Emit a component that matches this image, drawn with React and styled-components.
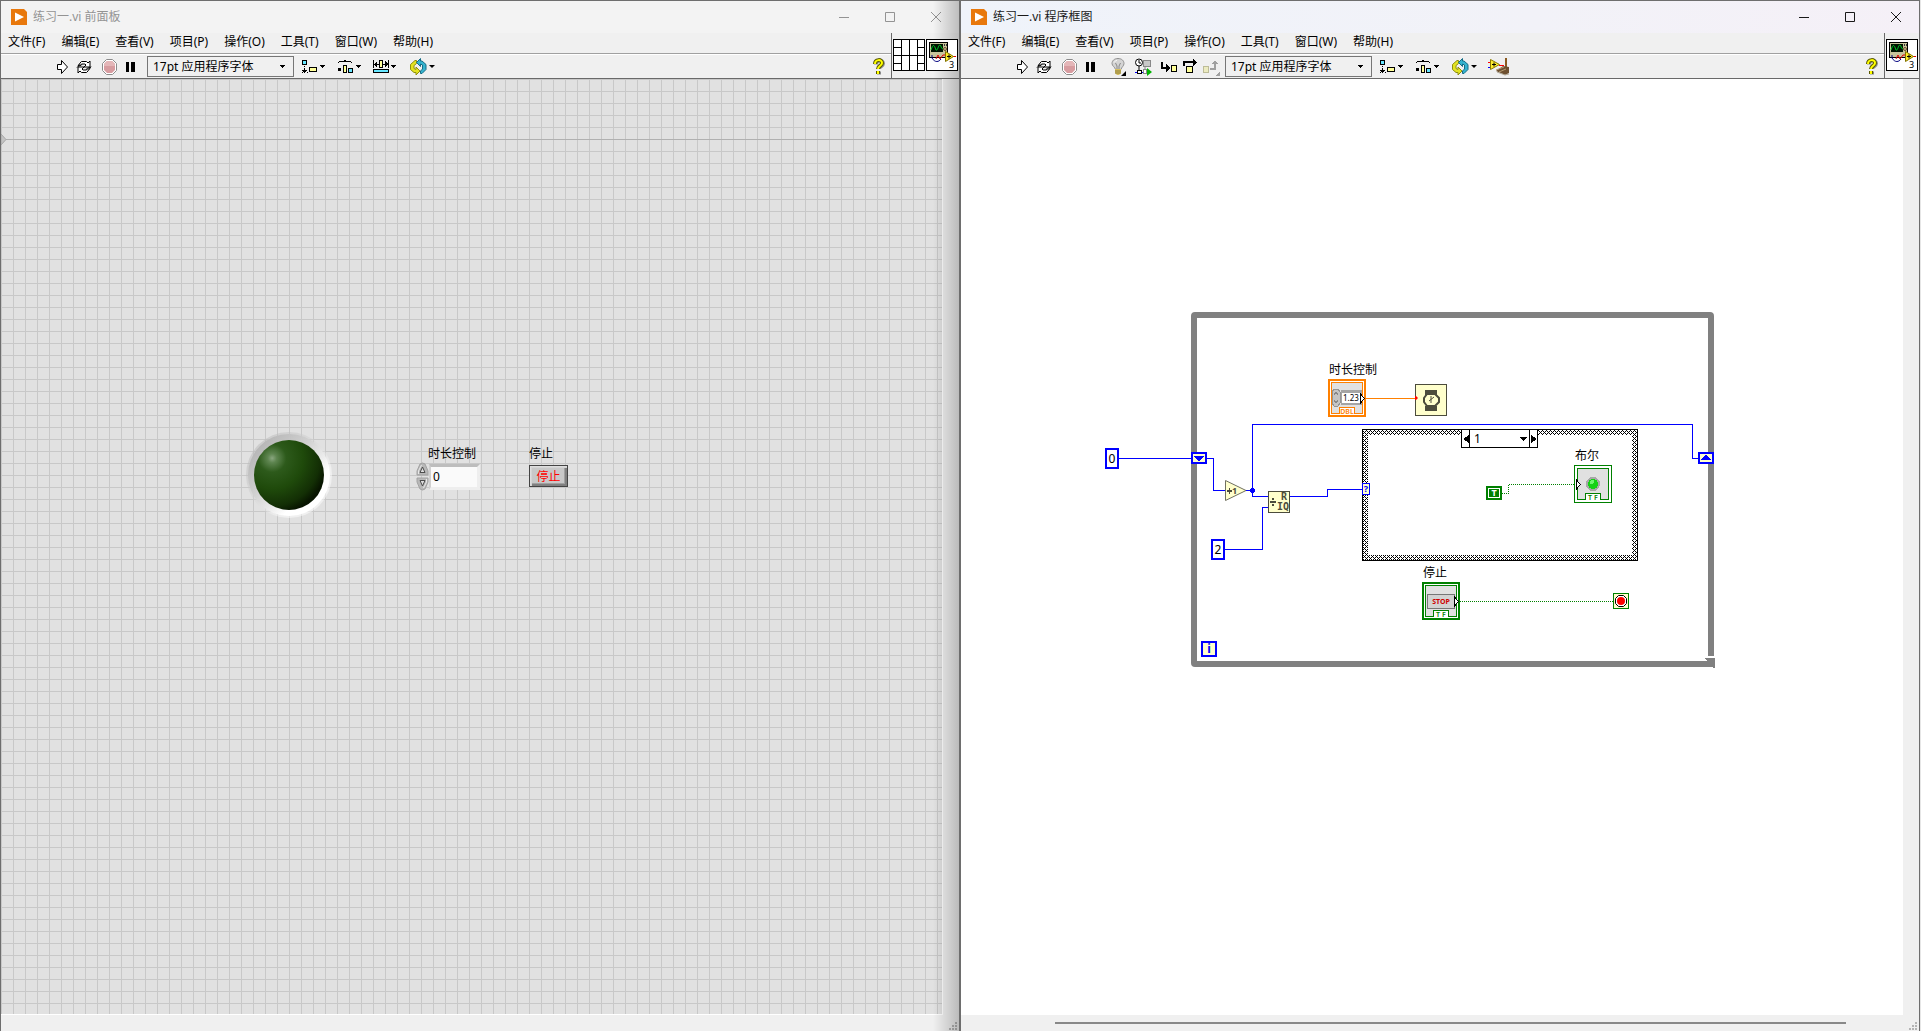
import React from 'react'
import styled, { createGlobalStyle, css } from 'styled-components'

const BLUE = '#0000ff'
const GREEN = '#008000'
const ORANGE = '#ff8000'
const CREAM = '#ffffcc'
const OLIVE = '#4c4c3c'

const GlobalStyle = createGlobalStyle`
	* {
		box-sizing: border-box;
	}

	body {
		background: #e6e6e6;
		color: #000;
		font: 12px/16px 'Noto Sans', 'Noto Sans CJK SC', sans-serif;
		margin: 0;
	}

	button, input, select {
		background: none;
		border: 0;
		border-radius: 0;
		color: inherit;
		font: inherit;
		margin: 0;
		padding: 0;
	}

	svg {
		display: block;
	}
`

const Desktop = styled.div`
	display: grid;
	grid-template-columns: 1fr 1fr;
	min-height: 100vh;
	padding-right: 1px;
`

const Window = styled.section`
	background: #f0f0f0;
	border: 1px solid #6e6e6e;
	border-bottom: 0;
	display: flex;
	flex-direction: column;
	min-width: 0;
	position: relative;

	${props =>
		props.$shaded &&
		css`
			&::after {
				background: linear-gradient(to right, transparent, rgba(0, 0, 0, 0.22));
				bottom: 0;
				content: '';
				pointer-events: none;
				position: absolute;
				right: 0;
				top: 0;
				width: 26px;
			}
		`}
`

const TitleBar = styled.header`
	align-items: center;
	background: ${props =>
		props.$active ? 'linear-gradient(to right, #eff3fa, #f2f2f8 60%, #f5f0f7)' : '#f3f3f3'};
	color: ${props => (props.$active ? '#191919' : '#939393')};
	display: flex;
	height: 32px;
	padding-left: 10px;
`

const Title = styled.h1`
	flex-grow: 1;
	font-size: 12px;
	font-weight: 400;
	margin: 0 0 0 6px;
`

const CaptionButton = styled.button`
	display: grid;
	height: 32px;
	place-items: center;
	width: 46px;
`

const Head = styled.div`
	border-bottom: 1px solid #696969;
	display: flex;
	height: 46px;
`

const Bars = styled.div`
	flex-grow: 1;
	min-width: 0;
`

const MenuBar = styled.nav`
	border-bottom: 1px solid #a0a0a0;
	display: flex;
	gap: 16px;
	height: 21px;
	padding: 1px 0 0 7px;

	a {
		color: inherit;
		text-decoration: none;
	}
`

const Toolbar = styled.div`
	align-items: center;
	border-top: 1px solid #fff;
	display: flex;
	height: 24px;
	padding-left: 50px;
`

const ToolButton = styled.button`
	flex: none;
	margin-left: ${props => props.$gap || 0}px;
	width: ${props => props.$w}px;
`

const FontBox = styled.div`
	background: #f0f0f0;
	border: 1px solid #767676;
	display: grid;
	height: 21px;
	margin: 0 2px 0 ${props => props.$gap}px;
	width: 147px;

	> * {
		grid-area: 1 / 1;
	}

	select {
		appearance: none;
		line-height: 19px;
		padding-left: 5px;
	}

	svg {
		align-self: center;
		justify-self: end;
		margin-right: 8px;
		pointer-events: none;
	}
`

const HelpButton = styled.button`
	margin: 0 6px 0 auto;
`

const Corner = styled.div`
	border-left: 1px solid #696969;
	display: flex;
	flex: none;
	gap: 1px;
	padding: 6px 1px 0;
	position: relative;
	z-index: 1;
`

const Body = styled.main`
	display: grid;
	flex-grow: 1;
	grid-template-columns: 1fr 16px;
	grid-template-rows: 1fr 16px;
`

const Panel = styled.div`
	background:
		linear-gradient(#b0b0b0, #b0b0b0) 0 60px / 100% 1px no-repeat,
		linear-gradient(to right, #c8c8c8 1px, transparent 1px) 0 0 / 12px 12px,
		linear-gradient(#c8c8c8 1px, transparent 1px) 0 0 / 12px 12px,
		#e1e1e1;
	border-bottom: 1px solid #fff;
	border-right: 1px solid #fff;
	overflow: hidden;
	position: relative;
`

const Diagram = styled.div`
	background: #fff;
	overflow: hidden;
	position: relative;
`

const Track = styled.div`
	grid-row: 2;
	padding: 7px 57px 0 94px;

	&::before {
		background: #888;
		content: '';
		display: block;
		height: 2px;
		visibility: ${props => (props.$thumb ? 'visible' : 'hidden')};
	}
`

const Grip = styled.div`
	align-items: end;
	display: grid;
	grid-area: 2 / 2;
	justify-content: end;
	padding: 0 2px 1px 0;
`

/* Anything that sits freely on a panel or diagram */
const Placed = styled.div`
	left: ${props => props.$x}px;
	position: absolute;
	top: ${props => props.$y}px;
`

const Caption = styled(Placed)`
	white-space: nowrap;
`

const Wires = styled.svg`
	fill: none;
	left: 0;
	pointer-events: none;
	position: absolute;
	shape-rendering: crispEdges;
	top: 0;
`

const Loop = styled(Placed)`
	border: 6px solid #808080;
	border-radius: 4px;
	height: 355px;
	width: 523px;
`

/* Woven border: a 1px checker with every fourth black pixel knocked out */
const CaseFrame = styled(Placed)`
	background:
		conic-gradient(from 270deg at 1px 1px, #fff 25%, transparent 0) 1px 0 / 4px 4px,
		conic-gradient(from 270deg at 1px 1px, #fff 25%, transparent 0) 3px 2px / 4px 4px,
		repeating-conic-gradient(#000 0 25%, #fff 0 50%) 0 0 / 2px 2px;
	border: 1px solid #000;
	height: 132px;
	padding: 5px;
	width: 276px;

	&::before {
		background: #fff;
		content: '';
		display: block;
		height: 100%;
	}
`

const CaseSelector = styled(Placed)`
	background: #fff;
	border: 1px solid #000;
	display: grid;
	grid-template-columns: 7px 1fr 7px;
	height: 19px;
	width: 77px;

	button {
		display: grid;
		place-items: center;
	}

	div {
		border: 1px solid #000;
		border-width: 0 1px;
		display: grid;
	}

	div > * {
		grid-area: 1 / 1;
	}

	select {
		appearance: none;
		line-height: 17px;
		padding-left: 4px;
	}

	svg {
		pointer-events: none;
	}

	div svg {
		align-self: center;
		justify-self: end;
		margin-right: 2px;
	}
`

const Constant = styled(Placed)`
	background: #fff;
	border: 2px solid ${BLUE};
	height: 21px;
	line-height: 17px;
	text-align: center;
	width: 14px;
`

const Counter = styled(Placed)`
	background: ${CREAM};
	border: 2px solid ${BLUE};
	color: ${BLUE};
	font-weight: 700;
	height: 16px;
	line-height: 12px;
	text-align: center;
	width: 16px;
`

const Numeric = styled(Placed)`
	align-items: center;
	display: flex;

	input {
		background: #fafafa;
		border: 3px solid #eee;
		border-left: 2px solid #d0d0d0;
		border-top-color: #bdbdbd;
		height: 26px;
		padding-left: 2px;
		width: 51px;
	}
`

const Spinner = styled.div`
	display: flex;
	flex-direction: column;
	gap: 1px;

	button {
		height: 14px;
	}
`

const StopButton = styled(Placed)`
	background: #c8c8c8;
	border: 1px solid #444;
	box-shadow: inset 1px 1px #dedede, inset 2px 2px #d4d4d4, inset -2px -2px #808080, inset -3px -3px #a0a0a0;
	color: #f00;
	height: 22px;
	padding-top: 1px;
	width: 39px;
`

const MENUS = ['文件(F)', '编辑(E)', '查看(V)', '项目(P)', '操作(O)', '工具(T)', '窗口(W)', '帮助(H)']

const Crisp = props => <svg shapeRendering="crispEdges" aria-hidden="true" {...props} />

const Logo = () => (
	<svg width="16" height="16" aria-hidden="true">
		<path d="M0 0h13l3 3v13H0z" fill="#e8780c" />
		<path d="M4 3.500L13 8l-9 4.500z" fill="#fff" />
	</svg>
)

const Triangle = () => <path d="M0 0h6l-3 3z" />

const RunIcon = () => (
	<svg width="22" height="18">
		<path d="M6.500 6.500h4v-4l6 6.500-6 6.500v-4h-4z" fill="#fff" stroke="#000" />
	</svg>
)

const RunLoopIcon = () => (
	<svg width="22" height="18" fill="#fff" stroke="#000">
		<path d="M6.500 5.500l2-2h5l1.500 1.500 2-2v6h-6l2-2-1-1h-3l-1 1.500-3 .5z" />
		<path d="M15.500 12.500l-2 2h-5L7 13l-2 2V9h6l-2 2 1 1h3l1.500-2 3-.5z" />
		<path d="M4 9.500l4-4M18 8.500l-4 4" />
	</svg>
)

const AbortIcon = () => (
	<svg width="22" height="18">
		<path d="M7.500 1.500h6l4 4v7l-4 4h-6l-4-4v-7z" fill="#fff" stroke="#8c8c8c" />
		<path d="M8 3h5l3 3v6l-3 3H8l-3-3V6z" fill="#d89ca0" />
		<path d="M8 3h5l3 3v2H5V6z" fill="#e4b6b8" />
	</svg>
)

const PauseIcon = () => (
	<Crisp width="20" height="18">
		<path d="M5 4h3v10H5zM10 4h4v10h-4z" />
	</Crisp>
)

const BulbIcon = () => (
	<svg width="24" height="18">
		<path
			d="M11 .5c4 0 6 2.500 6 5 0 2.500-2.500 3.500-3 6H8.500c-.5-2.500-3.500-3.500-3.500-6 0-2.500 2-5 6-5z"
			fill="#d4d4d4"
			stroke="#909090"
		/>
		<path d="M7 4.500C8 3 9 2.500 10 2.500" fill="none" stroke="#fff" />
		<path d="M8.500 5l1.500 3v3m3.500-6L12 8v3" fill="none" stroke="#888" />
		<path d="M8 11h6v4l-2 2h-2l-2-2z" fill="#d8c060" />
		<path d="M8 13h6m-6 2h6" stroke="#8a7d3a" />
		<path d="M19 13v5h-5z" />
	</svg>
)

const RetainIcon = () => (
	<svg width="26" height="18">
		<rect x="12.500" y="2.500" width="7" height="6" fill="#c8c8c8" stroke="#888" />
		<path d="M14 8.500v4" stroke="#888" />
		<circle cx="8" cy="4.500" r="3.500" fill="#fff" stroke="#000" />
		<path d="M8 2v3h2M8 8v4" fill="none" stroke="#000" />
		<path d="M4 14.500h13" stroke={BLUE} />
		<rect x="6.500" y="12.500" width="4" height="3" fill="#fff" stroke="#000" />
		<rect x="12.500" y="11.500" width="3" height="4" fill="#fff" stroke="#888" />
		<path d="M16 10l5 4-5 4z" fill="#00b400" />
	</svg>
)

const StepIntoIcon = () => (
	<Crisp width="23" height="18">
		<path d="M4 4h2v5h3V6l4 4-4 4v-3H4z" />
		<rect x="14.500" y="7.500" width="5" height="6" fill="#ffff99" stroke="#000" />
	</Crisp>
)

const StepOverIcon = () => (
	<Crisp width="20" height="18">
		<path d="M3 8V3h10V1l4 3-4 4V5H5v3z" />
		<rect x="6.500" y="8.500" width="6" height="6" fill="#ffff99" stroke="#000" />
	</Crisp>
)

const StepOutIcon = () => (
	<Crisp width="22" height="18">
		<rect x="3.500" y="8.500" width="5" height="6" fill="#ecebc0" stroke="#bdbc98" />
		<path d="M10 10h4V6h-2l3-4 3 4h-2v6h-6zM20 13v5h-5z" fill="#a0a0a0" />
	</Crisp>
)

const AlignIcon = () => (
	<Crisp width="26" height="18">
		<rect x="1.500" y="2.500" width="4" height="4" fill="#66e6ff" stroke="#000" />
		<path d="M3 8h1v1H3zM3 10h1v2H3zM1 12h5l-2 3H3zM1 14h1v1H1zM6 14h1v1H6z" />
		<rect x="8.500" y="9.500" width="7" height="4" fill="#ffff99" stroke="#000" />
		<g transform="translate(18 7)"><Triangle /></g>
	</Crisp>
)

const DistributeIcon = () => (
	<Crisp width="26" height="18">
		<path d="M1 4h1V3h5V2h2v1h5v1h1v1h-1V4H2v1H1zM1 10h3v3H1z" />
		<rect x="6.500" y="7.500" width="3" height="7" fill="#ffff99" stroke="#000" />
		<rect x="11.500" y="10.500" width="4" height="4" fill="#66e6ff" stroke="#000" />
		<g transform="translate(18 7)"><Triangle /></g>
	</Crisp>
)

const ResizeIcon = () => (
	<Crisp width="26" height="18">
		<path d="M0 2h1v8H0zM15 2h1v8h-1zM1 6l3-3v7zM15 6l-3-3v7zM4 6h8v1H4z" />
		<rect x="6.500" y="2.500" width="3" height="7" fill="#ffff99" stroke="#000" />
		<rect x=".5" y="11.500" width="15" height="3" fill="#66e6ff" stroke="#000" />
		<g transform="translate(17 7)"><Triangle /></g>
	</Crisp>
)

const ReorderIcon = () => (
	<svg width="27" height="18" aria-hidden="true">
		<path
			d="M7.500 2.500H6L1.500 6.500v5L5 14.500h2v2.500l4-4-4-4v2.500l-2-1v-3l2.500-2z"
			fill="#e4e420"
			stroke="#8e8e10"
		/>
		<path
			d="M11.500 15.500H13l4-4v-5l-4-3.500h-1.500V.5l-4 4 4 4V6l2 1v4l-2 2z"
			fill="#35b3cf"
			stroke="#156c85"
		/>
		<g transform="translate(20 7)"><Triangle /></g>
	</svg>
)

const CleanUpIcon = () => (
	<svg width="30" height="20">
		<path d="M6 5.500h3m8 3h5" stroke="#f00" />
		<path d="M6 10.500h3" stroke={BLUE} />
		<path d="M8.500 2.500l9 5-9 5z" fill="#ffee30" stroke="#8a7a00" />
		<path d="M10 7.500h4m-2-2v4" stroke="#000" />
		<path d="M24 1v11" stroke="#8a5a20" strokeWidth="2" />
		<path d="M21 9l6 1v6l-4 2-9-4z" fill="#6e5030" />
		<path d="M14 13l8-3m-5 5l7-3" stroke="#b59a70" />
		<path d="M15 15l8 3 4-1" fill="none" stroke="#b0a898" />
	</svg>
)

const HelpIcon = () => (
	<svg width="12" height="18">
		<g fill="none" strokeLinejoin="round">
			<path d="M3 6.500c0-5 7-5 7-1 0 3-4 2.500-4 5.500m0 2.500v3" stroke="#8c8c8c" strokeWidth="4" />
			<path d="M2 6c0-5 7-5 7-1 0 3-4 2.500-4 6m0 2v3" stroke="#5a5a00" strokeWidth="4" />
			<path d="M2 6c0-5 7-5 7-1 0 3-4 2.500-4 6m0 2v3" stroke="#ffff00" strokeWidth="2" />
		</g>
	</svg>
)

const ConnectorPane = () => (
	<Crisp width="32" height="32">
		<path
			d="M.5.5h31v31H.5zM8.500 0v32M16.500 0v32M24.500 0v32M0 16.500h32M0 8.500h8M0 24.500h8M24 8.500h8M24 24.500h8"
			fill="#fff"
			stroke="#000"
		/>
	</Crisp>
)

const ViIcon = () => (
	<svg width="32" height="32" aria-hidden="true">
		<rect x=".5" y=".5" width="31" height="31" fill="#fff" stroke="#000" />
		<rect x="3.500" y="3.500" width="18" height="15" fill="#c8c49a" stroke="#000" />
		<rect x="5" y="5" width="12" height="8" fill="#001400" />
		<path d="M5 11c2-6 3-6 5 0 2 1 2-5 4-5 1 0 1 4 3 4" fill="none" stroke="#00c828" />
		<path d="M18 6h1m1 0h1" stroke="#333" strokeWidth="2" />
		<circle cx="19" cy="10" r="1.500" fill="none" stroke="#6b4a2a" />
		<path d="M6 16v3c3 5 7 4 9 1" fill="none" stroke="#000080" />
		<path d="M10 20l2-4 2 4 3-4h3M27 17.500h3" fill="none" stroke="#e00000" />
		<path d="M19.500 12.500l8 5-8 5z" fill="#ffee20" stroke="#807000" />
		<path d="M21 17.500h4m-2-2v4" stroke="#000" />
		<text x="23" y="29" fontSize="9">3</text>
	</svg>
)

const CAPTION_ICONS = [
	['最小化', 'M0 6.500h10'],
	['最大化', 'M.5 1.500h9v9h-9z'],
	['关闭', 'M0 1l10 10M10 1L0 11'],
]

const ComboArrow = () => (
	<Crisp width="6" height="4">
		<Triangle />
	</Crisp>
)

const Frame = ({ title, active, children, debug, corner }) => (
	<Window $shaded={!active}>
		<TitleBar $active={active}>
			<Logo />
			<Title>{title}</Title>
			{CAPTION_ICONS.map(([name, d]) => (
				<CaptionButton key={name} aria-label={name}>
					<svg width="10" height="12" fill="none" stroke="currentColor">
						<path d={d} />
					</svg>
				</CaptionButton>
			))}
		</TitleBar>
		<Head>
			<Bars>
				<MenuBar>
					{MENUS.map(name => (
						<a key={name} href="#menu">
							{name}
						</a>
					))}
				</MenuBar>
				<Toolbar>
					<ToolButton $w={22} aria-label="运行"><RunIcon /></ToolButton>
					<ToolButton $w={22} aria-label="连续运行"><RunLoopIcon /></ToolButton>
					<ToolButton $w={22} $gap={4} aria-label="中止执行"><AbortIcon /></ToolButton>
					<ToolButton $w={20} aria-label="暂停"><PauseIcon /></ToolButton>
					{debug && (
						<>
							<ToolButton $w={24} $gap={6} aria-label="高亮显示执行过程"><BulbIcon /></ToolButton>
							<ToolButton $w={26} aria-label="保存连线值"><RetainIcon /></ToolButton>
							<ToolButton $w={23} aria-label="单步步入"><StepIntoIcon /></ToolButton>
							<ToolButton $w={20} aria-label="单步步过"><StepOverIcon /></ToolButton>
							<ToolButton $w={22} aria-label="单步步出"><StepOutIcon /></ToolButton>
						</>
					)}
					<FontBox $gap={debug ? 3 : 6}>
						<select aria-label="文本设置">
							<option>17pt 应用程序字体</option>
						</select>
						<ComboArrow />
					</FontBox>
					<ToolButton $w={31} $gap={5} aria-label="对齐对象"><AlignIcon /></ToolButton>
					<ToolButton $w={31} $gap={5} aria-label="分布对象"><DistributeIcon /></ToolButton>
					{!debug && (
						<ToolButton $w={31} $gap={5} aria-label="调整对象大小"><ResizeIcon /></ToolButton>
					)}
					<ToolButton $w={31} $gap={5} aria-label="重新排序"><ReorderIcon /></ToolButton>
					{debug && <ToolButton $w={30} aria-label="整理程序框图"><CleanUpIcon /></ToolButton>}
					<HelpButton aria-label="显示即时帮助"><HelpIcon /></HelpButton>
				</Toolbar>
			</Bars>
			<Corner>
				{corner}
				<ViIcon />
			</Corner>
		</Head>
		<Body>
			{children}
			<Track $thumb={active} />
			<Grip>
				<Crisp width="8" height="8">
					<path d="M6 0h2v2H6zM3 3h2v2H3zM6 3h2v2H6zM0 6h2v2H0zM3 6h2v2H3zM6 6h2v2H6z" fill="#b4b4b4" />
				</Crisp>
			</Grip>
		</Body>
	</Window>
)

const Led = () => (
	<svg width="88" height="88" role="img" aria-label="布尔">
		<defs>
			<linearGradient id="bezel" x1="0.150" y1="0.150" x2="0.850" y2="0.850">
				<stop offset="0" stopColor="#b8b8b8" />
				<stop offset="0.350" stopColor="#cfcfcf" />
				<stop offset="0.600" stopColor="#e8e8e8" />
				<stop offset="0.800" stopColor="#fff" />
			</linearGradient>
			<radialGradient id="lens" cx="0.260" cy="0.260" r="0.800">
				<stop offset="0" stopColor="#8aa680" />
				<stop offset="0.080" stopColor="#5e8550" />
				<stop offset="0.250" stopColor="#2d5a1b" />
				<stop offset="0.550" stopColor="#1f4a0b" />
				<stop offset="0.850" stopColor="#132f05" />
				<stop offset="1" stopColor="#071400" />
			</radialGradient>
		</defs>
		<circle cx="44" cy="44" r="43" fill="url(#bezel)" opacity="0.500" />
		<circle cx="44" cy="44" r="41" fill="url(#bezel)" />
		<circle cx="44" cy="44" r="35" fill="url(#lens)" />
	</svg>
)

const SpinArrow = ({ down }) => (
	<svg width="13" height="14">
		<g transform={down ? 'rotate(180 6.500 7)' : undefined}>
			<path d="M1 13V9l3-7 2.500-1L9 2l3 7v4z" fill="#b8b8b8" stroke="#a2a2a2" />
			<path d="M2.500 12V9l3-6" fill="none" stroke="#e8e8e8" />
			<path d="M4 10.500h5L6.500 5z" fill="#ddd" stroke="#4c4c4c" />
		</g>
	</svg>
)

const FrontPanel = () => (
	<Panel>
		<Placed $x={0} $y={55}>
			<svg width="6" height="11">
				<path d="M0 0l5 5.500L0 11z" fill="#c4c4c4" stroke="#a8a8a8" />
			</svg>
		</Placed>
		<Placed $x={244} $y={352}>
			<Led />
		</Placed>
		<Caption as="label" $x={427} $y={367} htmlFor="duration">时长控制</Caption>
		<Numeric $x={415} $y={383}>
			<Spinner>
				<button aria-label="增加"><SpinArrow /></button>
				<button aria-label="减少"><SpinArrow down /></button>
			</Spinner>
			<input id="duration" defaultValue="0" />
		</Numeric>
		<Caption as="label" $x={528} $y={367} htmlFor="stop">停止</Caption>
		<StopButton as="button" $x={528} $y={386} id="stop">停止</StopButton>
	</Panel>
)

const ShiftRegister = ({ up }) => (
	<Crisp width="16" height="12">
		<rect x="1" y="1" width="14" height="10" fill={CREAM} stroke={BLUE} strokeWidth="2" />
		<path d={up ? 'M3 8h10L9 3H7z' : 'M3 4h10L9 9H7z'} fill={BLUE} />
	</Crisp>
)

const Terminal = ({ color, type, source, children }) => (
	<Crisp width="38" height="38">
		<rect width="38" height="38" fill={color} />
		<rect x={source ? 2 : 1} y={source ? 2 : 1} width={source ? 34 : 36} height={source ? 34 : 36} fill="#fff" />
		<rect x="3.500" y="3.500" width="31" height="31" fill="#e1e1e1" stroke={color} />
		{children}
		<path d="M11.500 35V28.500h15V35" fill="#fff" stroke={color} />
		<path d="M12 34h14v2H12z" fill="#fff" />
		{type.map(([letter, x]) => (
			<text key={letter} x={x} y="35" fill={color} fontSize="7" fontWeight="600" textAnchor="middle">
				{letter}
			</text>
		))}
		<path d={source ? 'M32.500 15v9l4-4.500z' : 'M2.500 15v9l4-4.500z'} fill="#fff" stroke="#000" />
	</Crisp>
)

const TF = [['T', 16], ['F', 22]]
const DBL = [['DBL', 19]]

const WaitNode = () => (
	<svg width="32" height="32">
		<rect x=".5" y=".5" width="31" height="31" fill={CREAM} stroke={OLIVE} />
		<path d="M10 6h12v5H10zM10 22h12v5H10z" fill={OLIVE} />
		<path d="M12 10h8l4 4v4l-4 4h-8l-3-4v-4z" fill={CREAM} stroke={OLIVE} strokeWidth="2" />
		<path d="M16 12v7M14 17l5-4" fill="none" stroke={OLIVE} />
		<path d="M24 14h1v4h-1z" fill={OLIVE} />
		<path d="M0 12h1l2 2-2 2H0z" fill="#f00" />
	</svg>
)

const IncrementNode = () => (
	<svg width="22" height="21">
		<path d="M.5.5v20L21 10.500z" fill={CREAM} stroke="#707060" />
		<path d="M2 10h5v2H2zM4 8h1v6H4z" fill={OLIVE} />
		<text x="7" y="14" fill={OLIVE} fontSize="9" fontWeight="700">1</text>
	</svg>
)

const QuotientNode = () => (
	<svg width="22" height="22">
		<rect x=".5" y=".5" width="21" height="21" fill={CREAM} stroke={OLIVE} />
		<g fill={OLIVE} fontFamily="DejaVu Sans Mono" fontSize="10" fontWeight="700">
			<text x="13" y="9">R</text>
			<text x="9" y="19">IQ</text>
		</g>
		<path d="M2 10h6v2H2zM4 7h2v2H4zM4 13h2v2H4z" fill={OLIVE} />
	</svg>
)

const BlockDiagram = () => (
	<Diagram>
		<Loop $x={230} $y={233} />
		<CaseFrame $x={401} $y={350} />
		<Wires width="942" height="700">
			<g stroke={BLUE}>
				<path d="M158 379.500h72M246 379.500h6.500v32H264M285 411.500h6M307 417.500h-15.500v-72h440v34h6" />
				<path d="M329 417.500h37.500v-7H401M264 470.500h37.500v-42h6" />
			</g>
			<path d="M290 409h3v1h1v3h-1v1h-3v-1h-1v-3h1z" fill={BLUE} />
			<path d="M405 319.500h49" stroke={ORANGE} />
			<path d="M541 414.500h6.500v-9H613M499 522.500h153" stroke={GREEN} strokeDasharray="1 1" />
			<path d="M746 577h8v2h-8z" fill="#fff" />
			<path d="M744 579h10v10h-2v-1h-3v-2h-2v-4l-3-2z" fill="#808080" />
		</Wires>
		<Constant $x={144} $y={369}>0</Constant>
		<Constant $x={250} $y={460}>2</Constant>
		<Placed $x={230} $y={373}><ShiftRegister /></Placed>
		<Placed $x={737} $y={373}><ShiftRegister up /></Placed>
		<Placed $x={264} $y={401}><IncrementNode /></Placed>
		<Placed $x={307} $y={412}><QuotientNode /></Placed>

		<Caption $x={368} $y={283}>时长控制</Caption>
		<Placed $x={367} $y={300}>
			<Terminal color={ORANGE} type={DBL} source>
				<path d="M6 10h4l2 3v11l-2 3H6l-2-3V13z" fill="#c4c4c4" stroke="#949494" />
				<path d="M6 16l2-3 2 3M6 21l2 3 2-3" fill="none" stroke="#888" />
				<rect x="13" y="11" width="21" height="15" fill="#a4a4a4" />
				<rect x="14" y="14" width="19" height="10" fill="#fff" />
				<text x="15" y="22" fontSize="8">1.23</text>
			</Terminal>
		</Placed>
		<Placed $x={454} $y={305}><WaitNode /></Placed>

		<Placed $x={401} $y={404}>
			<svg width="8" height="12">
				<rect x=".5" y=".5" width="7" height="11" fill={CREAM} stroke={BLUE} />
				<text x="4" y="9" fill={BLUE} fontSize="9" fontWeight="700" textAnchor="middle">?</text>
			</svg>
		</Placed>
		<CaseSelector $x={500} $y={350}>
			<button aria-label="上一分支">
				<Crisp width="6" height="8"><path d="M6 0v8L0 4z" /></Crisp>
			</button>
			<div>
				<select aria-label="条件分支">
					<option>1</option>
				</select>
				<Crisp width="8" height="4"><path d="M0 0h8L4 4z" /></Crisp>
			</div>
			<button aria-label="下一分支">
				<Crisp width="6" height="8"><path d="M0 0v8l6-4z" /></Crisp>
			</button>
		</CaseSelector>
		<Placed $x={525} $y={407}>
			<Crisp width="16" height="14">
				<rect width="16" height="14" fill={GREEN} />
				<rect x="2.500" y="2.500" width="11" height="9" fill="none" stroke="#fff" />
				<text x="8" y="10" fill="#fff" fontSize="9" fontWeight="700" textAnchor="middle">T</text>
			</Crisp>
		</Placed>
		<Caption $x={614} $y={369}>布尔</Caption>
		<Placed $x={613} $y={386}>
			<Terminal color={GREEN} type={TF}>
				<circle cx="19" cy="19" r="7" fill="#a8a8a8" />
				<circle cx="19" cy="19" r="5" fill="#14d214" />
				<circle cx="18" cy="17" r="2" fill="#6cf76c" />
			</Terminal>
		</Placed>

		<Caption $x={462} $y={486}>停止</Caption>
		<Placed $x={461} $y={503}>
			<Terminal color={GREEN} type={TF} source>
				<rect x="5.500" y="12.500" width="27" height="14" fill="#d2d2d2" stroke="#777" />
				<text x="19" y="22" fill="#d00000" fontSize="7" fontWeight="700" textAnchor="middle">STOP</text>
			</Terminal>
		</Placed>
		<Placed $x={652} $y={514}>
			<svg width="16" height="16">
				<rect x=".5" y=".5" width="15" height="15" fill={CREAM} stroke={GREEN} />
				<path d="M5.500 2.500h5l3 3v5l-3 3h-5l-3-3v-5z" fill="#fff" stroke="#000" />
				<circle cx="8" cy="8" r="4" fill="#f00" />
			</svg>
		</Placed>
		<Counter $x={240} $y={562}>i</Counter>
	</Diagram>
)

const App = () => (
	<>
		<GlobalStyle />
		<Desktop>
			<Frame title="练习一.vi 前面板" corner={<ConnectorPane />}>
				<FrontPanel />
			</Frame>
			<Frame title="练习一.vi 程序框图" active debug>
				<BlockDiagram />
			</Frame>
		</Desktop>
	</>
)

export default App
